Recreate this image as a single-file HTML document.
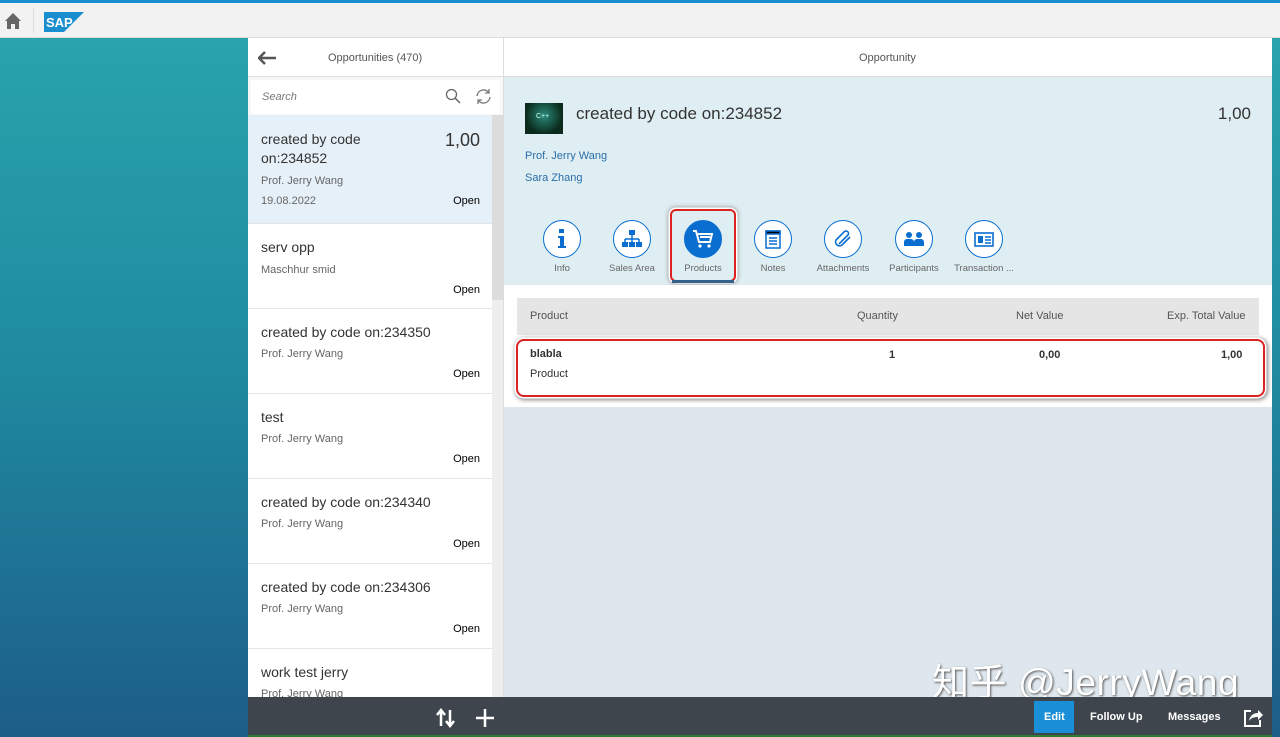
<!DOCTYPE html>
<html><head><meta charset="utf-8"><style>
*{margin:0;padding:0;box-sizing:border-box}
body{width:1280px;height:737px;overflow:hidden;position:relative;font-family:"Liberation Sans",Arial,sans-serif;background:linear-gradient(#2aa6ad,#1f8aa0 50%,#1d5d88);}
.a{position:absolute}
.t{position:absolute;white-space:nowrap}
.item{position:absolute;left:248px;width:244px;background:#fff;border-bottom:1px solid #e5e5e5}
.ttl{font-size:14px;color:#333}
.sub{font-size:11px;color:#666}
.open{font-size:11px;color:#000;right:12px}
.ic{position:absolute;top:220px;width:38px;height:38px;border:1.5px solid #0a6ed1;border-radius:50%;background:#fff;display:flex;align-items:center;justify-content:center}
.lb{position:absolute;top:263px;font-size:9.5px;color:#666;width:80px;text-align:center}
</style></head><body>
<div class="a" style="left:0;top:0;width:1280px;height:3px;background:#1a8fd0"></div>
<div class="a" style="left:0;top:3px;width:1280px;height:35px;background:#f2f2f2;border-bottom:1px solid #ddd"></div>
<svg class="a" style="left:4px;top:12px" width="18" height="18" viewBox="0 0 18 18"><path d="M9 1L1 9h2v8h4v-5h4v5h4V9h2z" fill="#666"/></svg>
<div class="a" style="left:33px;top:8px;width:1px;height:25px;background:#ddd"></div>
<svg class="a" style="left:44px;top:12px" width="40" height="20" viewBox="0 0 40 20"><path d="M0 0h40L20 20H0z" fill="#1a8fd0"/><text x="2" y="15" font-family="Liberation Sans" font-weight="bold" font-size="13" fill="#fff">SAP</text></svg>

<!-- master -->
<div class="a" style="left:248px;top:38px;width:256px;height:659px;background:#f7f7f7"></div>
<div class="a" style="left:248px;top:38px;width:256px;height:39px;background:#fff;border-bottom:1px solid #ddd"></div>
<svg class="a" style="left:258px;top:51px" width="18" height="14" viewBox="0 0 18 14"><path d="M7 1L1 7l6 6M1 7h17" stroke="#555" stroke-width="2.5" fill="none"/></svg>
<div class="t" style="left:328px;top:52px;font-size:11px;color:#555">Opportunities (470)</div>
<div class="a" style="left:251px;top:80px;width:249px;height:34px;background:#fff"></div>
<div class="t" style="left:262px;top:91px;font-size:11px;color:#777;font-style:italic">Search</div>
<svg class="a" style="left:445px;top:88px" width="16" height="16" viewBox="0 0 16 16"><circle cx="6.5" cy="6.5" r="5" stroke="#666" stroke-width="1.3" fill="none"/><path d="M10 10l5 5" stroke="#666" stroke-width="1.5"/></svg>
<svg class="a" style="left:475px;top:88px" width="17" height="17" viewBox="0 0 17 17"><path d="M2 8a6.5 6.5 0 0 1 12-3M15 9a6.5 6.5 0 0 1-12 3" stroke="#777" stroke-width="1.3" fill="none"/><path d="M14 1v4h-4M3 16v-4h4" stroke="#777" stroke-width="1.3" fill="none"/></svg>
<div class="a" style="left:492px;top:115px;width:11px;height:582px;background:#eee"></div>
<div class="a" style="left:492px;top:115px;width:11px;height:185px;background:#dcdcdc"></div>

<div class="item" style="top:115px;height:109px;background:#e5f0f8">
<div class="t ttl" style="left:13px;top:15px;line-height:19px">created by code<br>on:234852</div>
<div class="t" style="right:12px;top:15px;font-size:18px;color:#333">1,00</div>
<div class="t sub" style="left:13px;top:60px">Prof. Jerry Wang</div>
<div class="t sub" style="left:13px;top:80px">19.08.2022</div>
<div class="t open" style="top:80px">Open</div></div>
<div class="item" style="top:224px;height:85px"><div class="t ttl" style="left:13px;top:15px">serv opp</div><div class="t sub" style="left:13px;top:40px">Maschhur smid</div><div class="t open" style="top:60px">Open</div></div>
<div class="item" style="top:309px;height:85px"><div class="t ttl" style="left:13px;top:15px">created by code on:234350</div><div class="t sub" style="left:13px;top:39px">Prof. Jerry Wang</div><div class="t open" style="top:59px">Open</div></div>
<div class="item" style="top:394px;height:85px"><div class="t ttl" style="left:13px;top:15px">test</div><div class="t sub" style="left:13px;top:39px">Prof. Jerry Wang</div><div class="t open" style="top:59px">Open</div></div>
<div class="item" style="top:479px;height:85px"><div class="t ttl" style="left:13px;top:15px">created by code on:234340</div><div class="t sub" style="left:13px;top:39px">Prof. Jerry Wang</div><div class="t open" style="top:59px">Open</div></div>
<div class="item" style="top:564px;height:85px"><div class="t ttl" style="left:13px;top:15px">created by code on:234306</div><div class="t sub" style="left:13px;top:39px">Prof. Jerry Wang</div><div class="t open" style="top:59px">Open</div></div>
<div class="item" style="top:649px;height:48px;border:0"><div class="t ttl" style="left:13px;top:15px">work test jerry</div><div class="t sub" style="left:13px;top:39px">Prof. Jerry Wang</div></div>

<!-- detail -->
<div class="a" style="left:504px;top:38px;width:768px;height:659px;background:#dee7ed"></div>
<div class="a" style="left:504px;top:38px;width:768px;height:39px;background:#fff;border-bottom:1px solid #ddd"></div>
<div class="a" style="left:503px;top:38px;width:1px;height:659px;background:#ddd"></div>
<div class="t" style="left:859px;top:52px;font-size:11px;color:#555">Opportunity</div>
<div class="a" style="left:504px;top:78px;width:768px;height:206px;background:#dfeef3"></div>
<div class="a" style="left:525px;top:103px;width:38px;height:31px;background:radial-gradient(circle at 50% 40%,#2a8a7a,#0b2a1c 70%)"></div>
<div class="t" style="left:536px;top:113px;font-size:7px;color:#cfe">C++</div>
<div class="t" style="left:576px;top:104px;font-size:17px;color:#333">created by code on:234852</div>
<div class="t" style="right:29px;top:104px;font-size:17px;color:#333">1,00</div>
<div class="t" style="left:525px;top:150px;font-size:11px;color:#2a6ea8">Prof. Jerry Wang</div>
<div class="t" style="left:525px;top:172px;font-size:11px;color:#2a6ea8">Sara Zhang</div>

<div class="ic" style="left:543px"><svg width="12" height="20" viewBox="0 0 12 20"><rect x="3" y="0" width="5" height="4" fill="#0a6ed1"/><path d="M2 7h6v10h2v2H2v-2h2V9H2z" fill="#0a6ed1"/></svg></div>
<div class="ic" style="left:613px"><svg width="20" height="18" viewBox="0 0 20 18"><rect x="7" y="0" width="6" height="5" fill="#0a6ed1"/><path d="M10 5v4M3 9h14M3 9v3M17 9v3M10 9v3" stroke="#0a6ed1" stroke-width="1.5"/><rect x="0" y="12" width="6" height="5" fill="#0a6ed1"/><rect x="7" y="12" width="6" height="5" fill="#0a6ed1"/><rect x="14" y="12" width="6" height="5" fill="#0a6ed1"/></svg></div>
<div class="a" style="left:670px;top:209px;width:66px;height:73px;border:2.5px solid #d22;border-radius:6px;box-shadow:0 0 0 1.5px #fff,0 0 4px 2px #999"></div>
<div class="a" style="left:672px;top:280px;width:62px;height:3px;background:#346187"></div>
<div class="ic" style="left:684px;background:#0a6ed1;border-color:#0a6ed1"><svg width="22" height="20" viewBox="0 0 22 20"><path d="M1 2h3l3 11h11l2-8H6M8 8h10" stroke="#fff" stroke-width="2" fill="none"/><circle cx="8" cy="17" r="1.6" fill="#fff"/><circle cx="17" cy="17" r="1.6" fill="#fff"/></svg></div>
<div class="ic" style="left:754px"><svg width="16" height="20" viewBox="0 0 16 20"><rect x="1" y="2" width="14" height="17" stroke="#0a6ed1" stroke-width="1.5" fill="none"/><path d="M1 2h14v3H1zM4 9h8M4 12h8M4 15h8" stroke="#0a6ed1" stroke-width="1.5"/></svg></div>
<div class="ic" style="left:824px"><svg width="20" height="20" viewBox="0 0 20 20"><path d="M6 15L15 6a2.5 2.5 0 0 0-4-3L3 11a4 4 0 0 0 6 5l8-8" stroke="#0a6ed1" stroke-width="1.6" fill="none"/></svg></div>
<div class="ic" style="left:895px"><svg width="22" height="16" viewBox="0 0 22 16"><circle cx="6" cy="4" r="3" fill="#0a6ed1"/><circle cx="16" cy="4" r="3" fill="#0a6ed1"/><path d="M1 15v-4a3 3 0 0 1 3-3h4a3 3 0 0 1 3 3v4zM11 15v-4a3 3 0 0 1 3-3h4a3 3 0 0 1 3 3v4z" fill="#0a6ed1"/></svg></div>
<div class="ic" style="left:965px"><svg width="20" height="16" viewBox="0 0 20 16"><rect x="1" y="2" width="18" height="13" stroke="#0a6ed1" stroke-width="1.6" fill="none"/><rect x="4" y="5" width="5" height="7" fill="#0a6ed1"/><path d="M11 6h6M11 9h6M11 12h6" stroke="#0a6ed1" stroke-width="1.4"/></svg></div>
<div class="lb" style="left:522px">Info</div>
<div class="lb" style="left:592px">Sales Area</div>
<div class="lb" style="left:663px">Products</div>
<div class="lb" style="left:733px">Notes</div>
<div class="lb" style="left:803px">Attachments</div>
<div class="lb" style="left:874px">Participants</div>
<div class="lb" style="left:944px">Transaction ...</div>

<div class="a" style="left:504px;top:285px;width:768px;height:122px;background:#fff"></div>
<div class="a" style="left:517px;top:298px;width:742px;height:37px;background:#e5e5e5"></div>
<div class="t" style="left:530px;top:310px;font-size:11px;color:#555">Product</div>
<div class="t" style="left:857px;top:310px;font-size:11px;color:#555">Quantity</div>
<div class="t" style="left:1016px;top:310px;font-size:11px;color:#555">Net Value</div>
<div class="t" style="left:1167px;top:310px;font-size:11px;color:#555">Exp. Total Value</div>
<div class="a" style="left:516px;top:339px;width:749px;height:58px;border:2.5px solid #d22;border-radius:8px;box-shadow:0 0 0 1.5px #fff,1px 1px 4px 2px #888"></div>
<div class="t" style="left:530px;top:348px;font-size:11px;color:#333;font-weight:bold">blabla</div>
<div class="t" style="left:530px;top:368px;font-size:11px;color:#333">Product</div>
<div class="t" style="left:889px;top:349px;font-size:11px;color:#333;font-weight:bold">1</div>
<div class="t" style="left:1039px;top:349px;font-size:11px;color:#333;font-weight:bold">0,00</div>
<div class="t" style="left:1221px;top:349px;font-size:11px;color:#333;font-weight:bold">1,00</div>

<div class="t" style="left:932px;top:652px;font-size:37px;letter-spacing:0.6px;color:#fff;font-family:'Liberation Sans','Noto Sans CJK SC',sans-serif;text-shadow:1px 1px 2px #555">知乎 @JerryWang</div>

<!-- footer -->
<div class="a" style="left:248px;top:697px;width:1024px;height:40px;background:#3e454c"></div>
<div class="a" style="left:248px;top:735px;width:1024px;height:2px;background:#2e7d32"></div>
<svg class="a" style="left:436px;top:708px" width="20" height="20" viewBox="0 0 20 20"><path d="M5 18V3M1 7l4-5 4 5M14 2v15M10 13l4 5 4-5" stroke="#fff" stroke-width="2.5" fill="none"/></svg>
<svg class="a" style="left:476px;top:709px" width="18" height="18" viewBox="0 0 18 18"><path d="M9 0v18M0 9h18" stroke="#fff" stroke-width="2.5"/></svg>
<div class="a" style="left:1034px;top:701px;width:40px;height:32px;background:#1a8fd8"></div>
<div class="t" style="left:1044px;top:711px;font-size:11px;color:#fff;font-weight:bold">Edit</div>
<div class="t" style="left:1090px;top:711px;font-size:11px;color:#fff;font-weight:bold">Follow Up</div>
<div class="t" style="left:1168px;top:711px;font-size:11px;color:#fff;font-weight:bold">Messages</div>
<svg class="a" style="left:1243px;top:708px" width="20" height="19" viewBox="0 0 20 19"><path d="M8 3H2v15h15v-6" stroke="#fff" stroke-width="2" fill="none"/><path d="M6 13c1-6 5-8 9-8V2l5 5-5 5V9c-4 0-7 1-9 4z" fill="#fff"/></svg>
</body></html>
